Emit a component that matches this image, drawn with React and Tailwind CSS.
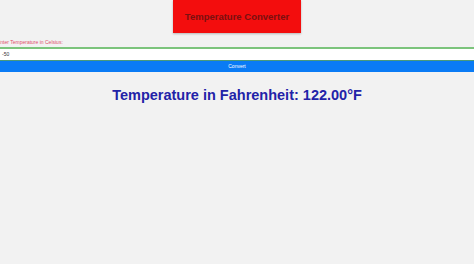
export default function App() {
  return (
    <div className="min-h-[264px] w-full bg-[#f2f2f2] font-['Liberation_Sans',Arial,sans-serif]">
      <div className="flex justify-center">
        <div className="flex h-[33px] w-[128px] items-center justify-center bg-[#f30d0d] shadow-[0_1px_2px_rgba(0,0,0,0.25)]">
          <h1 className="text-[9.5px] font-bold leading-none text-[#7a1010]">Temperature Converter</h1>
        </div>
      </div>
      <div className="mt-[6px] flex flex-col">
        <label className="-ml-[3px] text-[5px] leading-[6px] text-[#e0506a]">Enter Temperature in Celsius:</label>
        <div className="mt-[2px] flex h-[14px] items-center border-t-2 border-b border-t-[#7cc47c] border-b-[#4a9a7a] bg-white px-[2px] text-[5px] text-[#333]">
          -50
        </div>
        <div className="flex h-[11px] items-center justify-center bg-[#0a7bf5] text-[5px] text-white">
          Convert
        </div>
      </div>
      <div className="mt-[14px] flex justify-center">
        <h2 className="text-[14.5px] font-bold leading-[18px] text-[#2222a8]">Temperature in Fahrenheit: 122.00°F</h2>
      </div>
    </div>
  );
}
